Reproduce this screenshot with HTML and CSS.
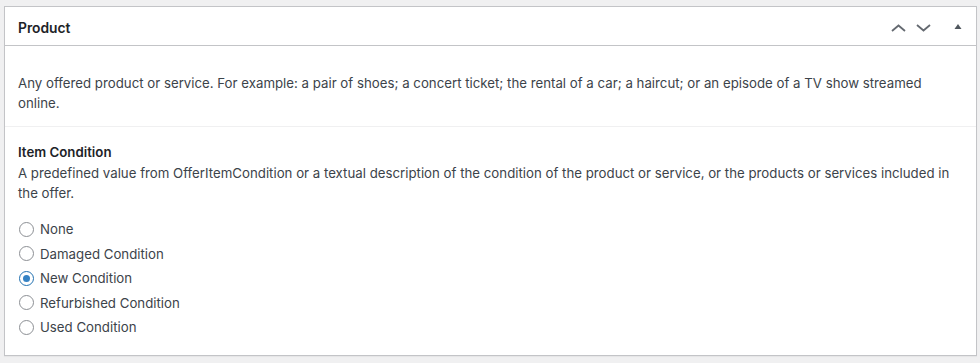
FILE: index.html
```html
<!DOCTYPE html>
<html lang="en">
<head>
<meta charset="utf-8">
<title>Product</title>
<link rel="stylesheet" href="styles.css">
</head>
<body>
<div class="postbox">
  <div class="postbox-header">
    <h2 class="title">Product</h2>
    <div class="actions">
      <svg class="chev" width="17" height="10" viewBox="0 0 17 10"><path d="M2 8 L8.5 2.5 L15 8" fill="none" stroke="#646970" stroke-width="1.8"/></svg>
      <svg class="chev" width="17" height="10" viewBox="0 0 17 10"><path d="M2 2 L8.5 7.5 L15 2" fill="none" stroke="#646970" stroke-width="1.8"/></svg>
      <svg class="tri" width="10" height="8" viewBox="0 0 10 8"><path d="M1.5 7 L5 2 L8.5 7 Z" fill="#50575e"/></svg>
    </div>
  </div>
  <div class="section intro">
    <p>Any offered product or service. For example: a pair of shoes; a concert ticket; the rental of a car; a haircut; or an episode of a TV show streamed online.</p>
  </div>
  <div class="section field">
    <div class="label">Item Condition</div>
    <p class="desc">A predefined value from OfferItemCondition or a textual description of the condition of the product or service, or the products or services included in the offer.</p>
    <ul class="options">
      <li><span class="radio"></span>None</li>
      <li><span class="radio"></span>Damaged Condition</li>
      <li><span class="radio checked"></span>New Condition</li>
      <li><span class="radio"></span>Refurbished Condition</li>
      <li><span class="radio"></span>Used Condition</li>
    </ul>
  </div>
</div>
</body>
</html>
```
FILE: styles.css
```css
html, body {
  margin: 0;
  padding: 0;
}
body {
  background: #f0f0f1;
  padding: 6px 3px 0 4px;
  font-family: "Inter", "Liberation Sans", sans-serif;
  font-size: 13.25px;
  color: #3c434a;
  height: 363px;
  box-sizing: border-box;
}
.postbox {
  background: #fff;
  border: 1px solid #c3c4c7;
  box-shadow: 0 1px 1px rgba(0,0,0,.04);
  height: 350px;
  box-sizing: border-box;
}
.postbox-header {
  height: 39px;
  box-sizing: border-box;
  border-bottom: 1px solid #c3c4c7;
  display: flex;
  align-items: center;
  justify-content: space-between;
  padding: 3px 13px 0;
}
.title {
  margin: 0;
  font-size: 13.8px;
  font-weight: 600;
  color: #1d2327;
}
.actions {
  display: flex;
  align-items: center;
  gap: 8px;
  margin-right: 0;
}
.tri {
  margin-left: 13px;
  margin-bottom: 3px;
}
.section {
  padding: 0 13px;
}
.intro {
  padding-top: 28px;
  padding-bottom: 13px;
  border-bottom: 1px solid #f0f0f1;
}
.intro p {
  margin: 0;
  line-height: 19.5px;
}
.field {
  padding-top: 16px;
}
.label {
  font-weight: 600;
  color: #1d2327;
  line-height: 19px;
}
.desc {
  margin: 2px 0 0;
  line-height: 19.5px;
}
.options {
  list-style: none;
  margin: 14px 0 0;
  padding: 0;
}
.options li {
  display: flex;
  align-items: center;
  height: 24.5px;
}
.radio {
  width: 15px;
  height: 15px;
  border: 1px solid #8c8f94;
  border-radius: 50%;
  margin: 0 6px 0 1px;
  box-sizing: border-box;
  display: inline-flex;
  align-items: center;
  justify-content: center;
  background: #fff;
}
.radio.checked {
  border-color: #2271b1;
}
.radio.checked::after {
  content: "";
  width: 7px;
  height: 7px;
  border-radius: 50%;
  background: #3582c4;
}
```
